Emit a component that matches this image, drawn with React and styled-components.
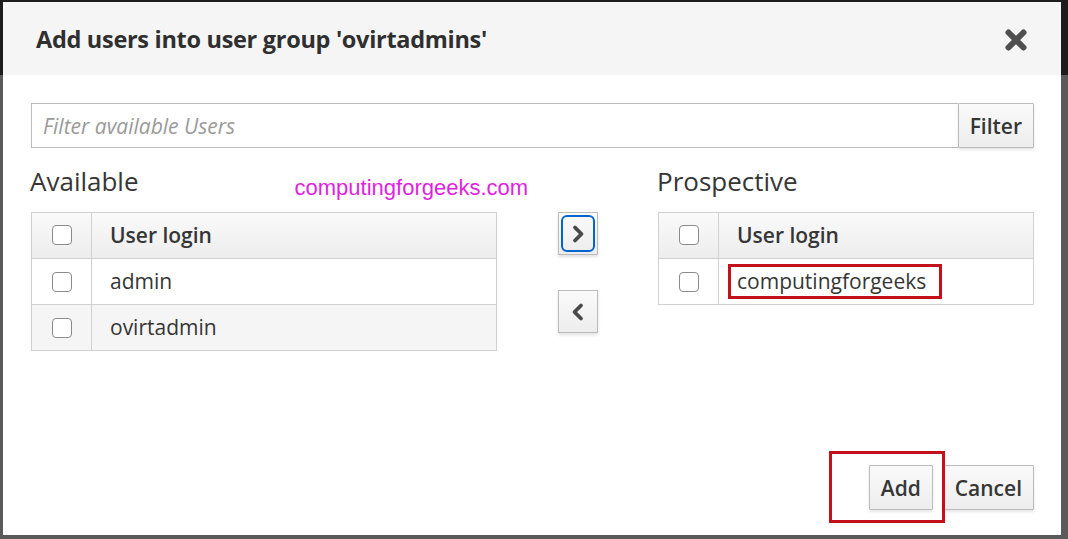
import React from "react";
import styled, { createGlobalStyle } from "styled-components";

const Global = createGlobalStyle`
  html, body { margin: 0; padding: 0; }
  body {
    width: 1068px;
    height: 539px;
    overflow: hidden;
    background: linear-gradient(#1d1d1d 0, #1d1d1d 75px, #5a5a5a 75px, #5a5a5a 100%);
    font-family: "Open Sans", "DejaVu Sans", sans-serif;
    color: #363636;
  }
`;

const Modal = styled.div`
  position: relative;
  width: 1058px;
  height: 533px;
  margin: 2px 0 0 3px;
  background: #fff;
  display: flex;
  flex-direction: column;
  box-sizing: border-box;
`;

const Header = styled.div`
  height: 73px;
  flex: none;
  background: #f5f5f5;
  display: flex;
  align-items: center;
  justify-content: space-between;
  padding: 0 33px 0 33px;
  box-sizing: border-box;
`;

const Title = styled.h4`
  margin: 0;
  font-size: 23.5px;
  font-weight: 700;
  letter-spacing: -0.3px;
  color: #2f2f2f;
`;

const Close = styled.button`
  border: 0;
  background: none;
  padding: 0;
  width: 24px;
  height: 24px;
  display: flex;
  margin-top: 3px;
`;

const Body = styled.div`
  flex: 1;
  display: flex;
  flex-direction: column;
  padding: 28px 27px 25px 28px;
  box-sizing: border-box;
`;

const FilterRow = styled.div`
  display: flex;
  height: 45px;
`;

const FilterInput = styled.input`
  flex: 1;
  border: 1px solid #bbb;
  border-right: 0;
  padding: 0 11px;
  font-family: inherit;
  font-size: 21px;
  font-style: italic;
  outline: none;
  &::placeholder { color: #9a9a9a; }
`;

const Button = styled.button`
  font-family: inherit;
  font-size: 21px;
  font-weight: 600;
  color: #363636;
  background: linear-gradient(#fafafa, #ededed);
  border: 1px solid #bbb;
  border-radius: 1px;
  padding: 0 ${(p) => p.$px || 11}px;
  height: ${(p) => p.$h || 45}px;
  box-shadow: 0 2px 3px rgba(3, 3, 3, 0.1);
  cursor: pointer;
`;

const Lists = styled.div`
  display: grid;
  grid-template-columns: 466px 40px 376px;
  grid-template-rows: 36px auto;
  justify-content: space-between;
  row-gap: 13px;
  margin-top: 15px;
`;

const LabelRow = styled.div`
  display: flex;
  align-items: baseline;
`;

const ListLabel = styled.div`
  font-size: 26px;
  line-height: 36px;
  color: #363636;
  margin-left: -1px;
`;

const Watermark = styled.span`
  font-family: "Liberation Sans", Arial, sans-serif;
  font-size: 22px;
  color: #e21fe2;
  margin-left: 156px;
  position: relative;
  top: 4px;
`;

const Table = styled.div`
  border: 1px solid #d1d1d1;
  border-bottom: 0;
  align-self: start;
`;

const Row = styled.div`
  display: grid;
  grid-template-columns: 60px 1fr;
  height: 45px;
  border-bottom: 1px solid #d1d1d1;
  background: ${(p) =>
    p.$head ? "linear-gradient(#fafafa, #ededed)" : p.$odd ? "#f5f5f5" : "#fff"};
`;

const CheckCell = styled.div`
  display: flex;
  align-items: center;
  justify-content: center;
  border-right: 1px solid #d1d1d1;
`;

const Check = styled.span`
  width: 18px;
  height: 18px;
  border: 1.5px solid #8b8b8b;
  border-radius: 4px;
  background: #fff;
  box-sizing: content-box;
  margin-top: ${(p) => (p.$head ? -2 : 0)}px;
`;

const TextCell = styled.div`
  display: flex;
  align-items: center;
  padding: 0 0 2px 18px;
  font-size: 21px;
  font-weight: ${(p) => (p.$head ? 600 : 400)};
  color: #363636;
`;

const Marked = styled.span`
  display: inline-block;
  border: 3px solid #c4101b;
  line-height: 27px;
  padding: 1px 13px 1px 6px;
  margin: 2px 0 0 -9px;
`;

const Arrows = styled.div`
  display: flex;
  flex-direction: column;
  gap: 35px;
`;

const ArrowBtn = styled.button`
  width: 40px;
  height: 43px;
  padding: 2px;
  margin: 0;
  background: linear-gradient(#fafafa, #ededed);
  border: 1px solid #bbb;
  box-shadow: 0 2px 3px rgba(3, 3, 3, 0.12);
  display: flex;
  box-sizing: border-box;
`;

const Focus = styled.span`
  flex: 1;
  display: flex;
  align-items: center;
  justify-content: center;
  border: ${(p) => (p.$focus ? "2.5px solid #0066cc" : "2.5px solid transparent")};
  border-radius: 6px;
`;

const Footer = styled.div`
  margin-top: auto;
  display: flex;
  justify-content: flex-end;
  gap: 10px;
  position: relative;
`;

const Annotation = styled.div`
  position: absolute;
  right: 89px;
  top: -14px;
  width: 110px;
  height: 66px;
  border: 3px solid #c4101b;
  pointer-events: none;
`;

const Chevron = ({ dir }) => (
  <svg width="18" height="20" viewBox="0 0 18 20">
    <path
      d={dir === "right" ? "M6 3.5 L12.5 10 L6 16.5" : "M12 3.5 L5.5 10 L12 16.5"}
      fill="none"
      stroke="#4a4a4a"
      strokeWidth="3.8"
      strokeLinecap="round"
      strokeLinejoin="round"
    />
  </svg>
);

export default function App() {
  return (
    <>
      <Global />
      <Modal>
        <Header>
          <Title>Add users into user group 'ovirtadmins'</Title>
          <Close aria-label="Close">
            <svg width="24" height="24" viewBox="0 0 24 24">
              <path
                d="M4.5 4.5 L19.5 19.5 M19.5 4.5 L4.5 19.5"
                stroke="#4f4f4f"
                strokeWidth="6"
                strokeLinecap="round"
              />
            </svg>
          </Close>
        </Header>
        <Body>
          <FilterRow>
            <FilterInput placeholder="Filter available Users" />
            <Button $px={11}>Filter</Button>
          </FilterRow>
          <Lists>
            <LabelRow>
              <ListLabel>Available</ListLabel>
              <Watermark>computingforgeeks.com</Watermark>
            </LabelRow>
            <div />
            <LabelRow>
              <ListLabel>Prospective</ListLabel>
            </LabelRow>
            <Table>
              <Row $head>
                <CheckCell><Check $head /></CheckCell>
                <TextCell $head>User login</TextCell>
              </Row>
              <Row>
                <CheckCell><Check /></CheckCell>
                <TextCell>admin</TextCell>
              </Row>
              <Row $odd>
                <CheckCell><Check /></CheckCell>
                <TextCell>ovirtadmin</TextCell>
              </Row>
            </Table>
            <Arrows>
              <ArrowBtn aria-label="Add selected">
                <Focus $focus><Chevron dir="right" /></Focus>
              </ArrowBtn>
              <ArrowBtn aria-label="Remove selected">
                <Focus><Chevron dir="left" /></Focus>
              </ArrowBtn>
            </Arrows>
            <Table>
              <Row $head>
                <CheckCell><Check $head /></CheckCell>
                <TextCell $head>User login</TextCell>
              </Row>
              <Row>
                <CheckCell><Check /></CheckCell>
                <TextCell><Marked>computingforgeeks</Marked></TextCell>
              </Row>
            </Table>
          </Lists>
          <Footer>
            <Button $px={11}>Add</Button>
            <Button $px={11}>Cancel</Button>
            <Annotation />
          </Footer>
        </Body>
      </Modal>
    </>
  );
}
